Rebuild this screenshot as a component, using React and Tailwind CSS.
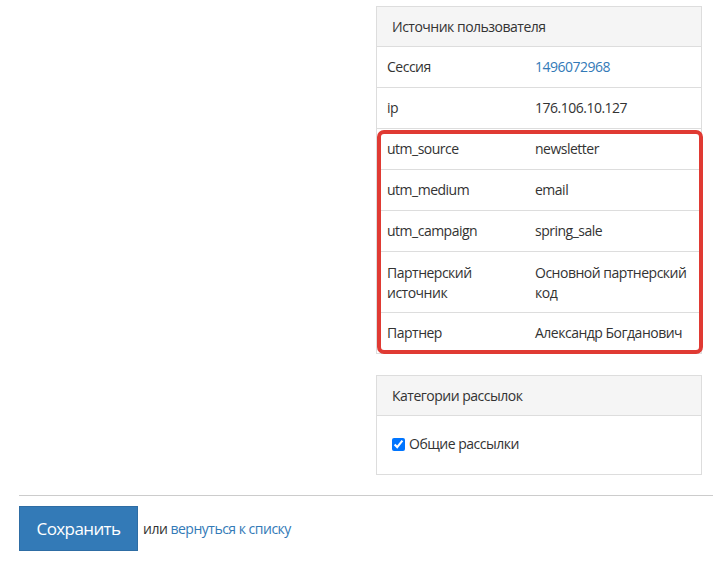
import React from "react";

const font = { fontFamily: '"Open Sans", "Liberation Sans", sans-serif' };

function Row({ label, children, last, tall }) {
  const pad = tall ? "pt-[11px] pb-[9px]" : "pt-[10px] pb-[10px]";
  return (
    <div className={`flex text-[14px] leading-[20px] text-[#333] ${last ? "" : "border-b border-[#ddd]"}`}>
      <div className={`w-[147px] shrink-0 px-[10px] ${pad}`}>{label}</div>
      <div className={`flex-1 px-[11px] ${pad}`}>{children}</div>
    </div>
  );
}

export default function App() {
  return (
    <div className="w-[713px] h-[563px] bg-white overflow-hidden tracking-[-0.5px]" style={font}>
      <div className="flex pt-[6px]">
        <div className="flex-1" />
        <div className="w-[326px] mr-[11px]">
          {/* user source panel */}
          <div className="relative">
            <div className="border border-[#ddd]">
              <div className="h-[40px] bg-[#f5f5f5] border-b border-[#ddd] px-[15px] flex items-center text-[14px] text-[#333]">
                Источник пользователя
              </div>
              <Row label="Сессия">
                <a className="text-[#337ab7]">1496072968</a>
              </Row>
              <Row label="ip">176.106.10.127</Row>
              <Row label="utm_source">newsletter</Row>
              <Row label="utm_medium">email</Row>
              <Row label="utm_campaign">spring_sale</Row>
              <Row label={<>Партнерский<br />источник</>} tall>Основной партнерский код</Row>
              <Row label="Партнер" last>Александр Богданович</Row>
            </div>
            <div className="absolute left-[1px] top-[124px] w-[326px] h-[224px] border-[4px] border-[#e03a33] rounded-[7px] pointer-events-none" />
          </div>

          {/* mailing categories panel */}
          <div className="mt-[21px] border border-[#ddd]">
            <div className="h-[40px] bg-[#f5f5f5] border-b border-[#ddd] px-[15px] flex items-center text-[14px] text-[#333]">
              Категории рассылок
            </div>
            <div className="h-[58px] px-[15px] pt-[18px]">
              <label className="flex items-center gap-[4px] text-[14px] leading-[20px] text-[#333]">
                <input type="checkbox" defaultChecked className="w-[13px] h-[13px] m-0 accent-[#0075ff]" />
                Общие рассылки
              </label>
            </div>
          </div>
        </div>
      </div>

      <div className="ml-[19px] mt-[20px] border-t border-[#ccc]" />

      <div className="ml-[19px] mt-[10px] flex items-center">
        <button className="w-[119px] h-[45px] bg-[#337ab7] border border-[#2e6da4] text-white text-[17px] tracking-[-0.6px] flex items-center justify-center">
          Сохранить
        </button>
        <span className="ml-[5px] text-[14px] text-[#333]">
          или <a className="text-[#337ab7]">вернуться к списку</a>
        </span>
      </div>
    </div>
  );
}
